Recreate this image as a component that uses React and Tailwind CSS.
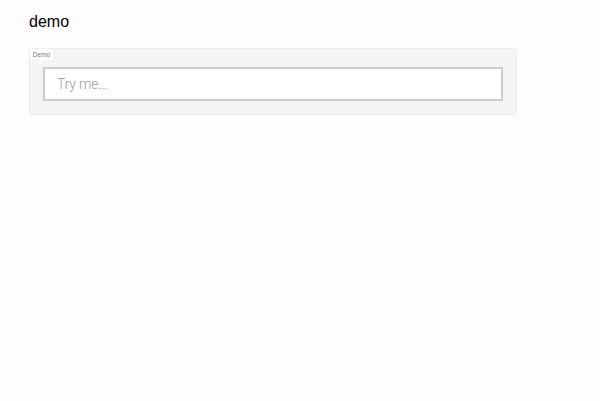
export default function App() {
  return (
    <div
      className="w-[600px] h-[401px] bg-[#fdfcfe] px-[29px] pt-[12px]"
      style={{ fontFamily: '"Liberation Sans", Arial, sans-serif' }}
    >
      <h1 className="text-[16px] leading-[20px] text-black">demo</h1>
      <div className="mt-[16px] w-[488px] relative bg-[#f4f5f6] border border-[#ececee] rounded-[3px] pt-[18px] pb-[13px] px-[13px]">
        <span className="absolute left-0 top-0 w-[23px] text-center bg-white pt-[1px] h-[11px] text-[6.5px] leading-[9px] text-[#7a7a7a] rounded-br-[2px]">
          Demo
        </span>
        <div className="h-[34px] bg-white border-2 border-[#cccccc] flex items-center px-[12px]">
          <span
            className="text-[14px] text-[#9c9c9c] font-light tracking-[-0.2px]"
            style={{ fontFamily: 'Roboto, "Liberation Sans", sans-serif' }}
          >
            Try me…
          </span>
        </div>
      </div>
    </div>
  );
}
